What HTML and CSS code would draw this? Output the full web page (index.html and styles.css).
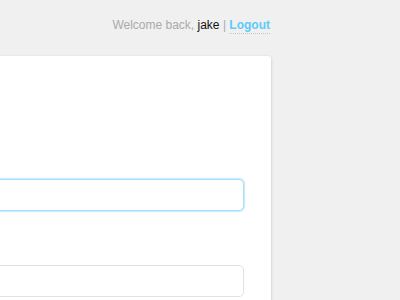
FILE: index.html
```html
<!DOCTYPE html>
<html>
<head>
<meta charset="utf-8">
<link rel="stylesheet" href="styles.css">
</head>
<body>
<div class="page">
  <div class="topbar">
    <span class="welcome">Welcome back, <span class="user">jake</span> | <a class="logout" href="#">Logout</a></span>
  </div>
  <div class="card">
    <div class="field focused"></div>
    <div class="field"></div>
  </div>
</div>
</body>
</html>
```
FILE: styles.css
```css
html, body {
  margin: 0;
  padding: 0;
  background: #f0f0f0;
  overflow: hidden;
}
.page {
  width: 311px;
  margin-left: -40px;
}
.topbar {
  height: 56px;
  box-sizing: border-box;
  padding-top: 18px;
  padding-right: 1px;
  text-align: right;
  font-family: "Liberation Sans", Arial, sans-serif;
  font-size: 12px;
  line-height: 15px;
  color: #aaaaaa;
}
.user {
  color: #111111;
}
.logout {
  color: #5ccbf8;
  font-weight: bold;
  text-decoration: none;
  border-bottom: 1px dotted #c8c8c8;
  padding-bottom: 1px;
}
.card {
  background: #ffffff;
  border-radius: 3px;
  box-shadow: 0 1px 3px rgba(0, 0, 0, 0.22);
  height: 320px;
  box-sizing: border-box;
  padding: 123px 27px 0 30px;
  display: flex;
  flex-direction: column;
  gap: 54px;
}
.field {
  height: 32px;
  box-sizing: border-box;
  border: 1px solid #e2e2e2;
  border-radius: 5px;
  background: #fff;
  flex: none;
}
.field.focused {
  border: 1px solid #a9e0fa;
  box-shadow: 0 0 0 1px #c9ecfc, 0 0 3px rgba(150, 215, 245, 0.5);
}
```
